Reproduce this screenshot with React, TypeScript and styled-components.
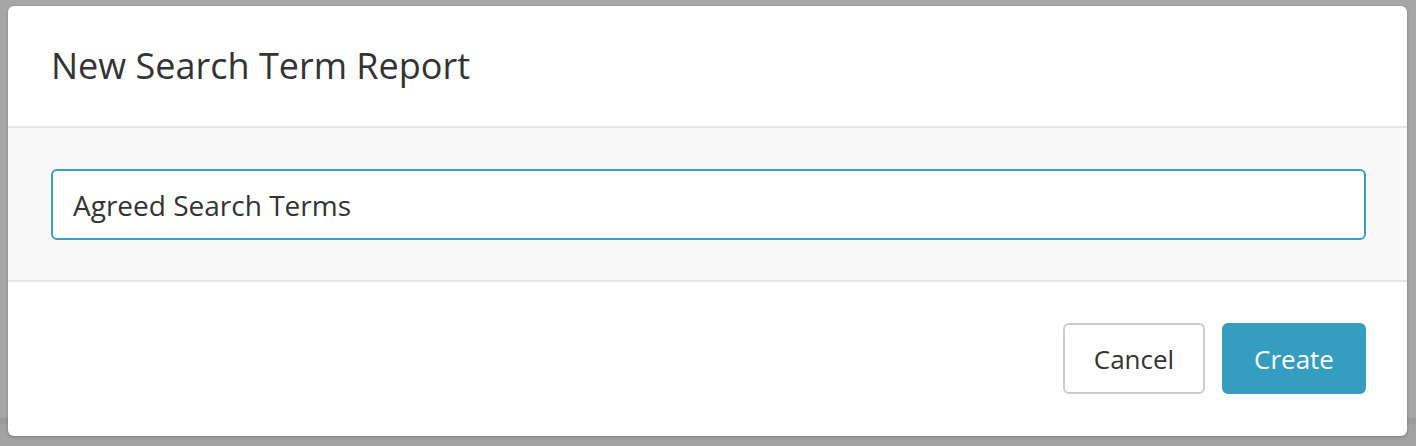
import styled, { createGlobalStyle } from "styled-components";

const GlobalStyle = createGlobalStyle`
    html, body {
        margin: 0;
        padding: 0;
    }
    body {
        background: linear-gradient(to bottom, #a6a6a6 0, #a6a6a6 418px, #9a9a9a 418px, #9a9a9a 424px, #a2a2a2 424px);
        font-family: "Open Sans", "Liberation Sans", sans-serif;
        height: 446px;
        overflow: hidden;
    }
`

const Backdrop = styled.div`
    padding: 6px 9px 10px 8px;
`

const Modal = styled.div`
    background: #fff;
    border-radius: 6px;
    box-shadow: 0 1px 3px rgba(0, 0, 0, 0.25);
    overflow: hidden;
`

const Header = styled.div`
    height: 122px;
    display: flex;
    align-items: center;
    padding: 0 42px 0 43px;
    border-bottom: 2px solid #e6e6e6;
    box-sizing: border-box;
`

const Title = styled.h4`
    margin: 0;
    font-size: 36px;
    font-weight: 400;
    color: #333;
    padding-bottom: 2px;
`

const Body = styled.div`
    background: #f9f9f9;
    padding: 41px 41px 40px 43px;
    border-bottom: 2px solid #e6e6e6;
`

const TextInput = styled.input`
    display: block;
    width: 100%;
    box-sizing: border-box;
    height: 71px;
    border: 2px solid #3a9fc1;
    border-radius: 6px;
    background: #fff;
    padding: 0 20px;
    font-family: "Open Sans", "Liberation Sans", sans-serif;
    font-size: 28px;
    color: #333;
    outline: none;
`

const Footer = styled.div`
    display: flex;
    justify-content: flex-end;
    gap: 17px;
    padding: 41px 41px 42px;
`

const Button = styled.button<{ $primary?: boolean }>`
    height: 71px;
    width: ${props => props.$primary ? '144px' : '142px'};
    padding: 0;
    border-radius: 6px;
    font-family: "Open Sans", "Liberation Sans", sans-serif;
    font-size: 26px;
    cursor: pointer;
    border: 2px solid ${props => props.$primary ? '#359ec0' : '#cccccc'};
    background: ${props => props.$primary ? '#359ec0' : '#fff'};
    color: ${props => props.$primary ? '#fff' : '#333'};
`

const App = () => {
    return (
        <>
            <GlobalStyle />
            <Backdrop>
                <Modal>
                    <Header>
                        <Title>New Search Term Report</Title>
                    </Header>
                    <Body>
                        <TextInput defaultValue="Agreed Search Terms" />
                    </Body>
                    <Footer>
                        <Button>Cancel</Button>
                        <Button $primary>Create</Button>
                    </Footer>
                </Modal>
            </Backdrop>
        </>
    )
}

export default App;
